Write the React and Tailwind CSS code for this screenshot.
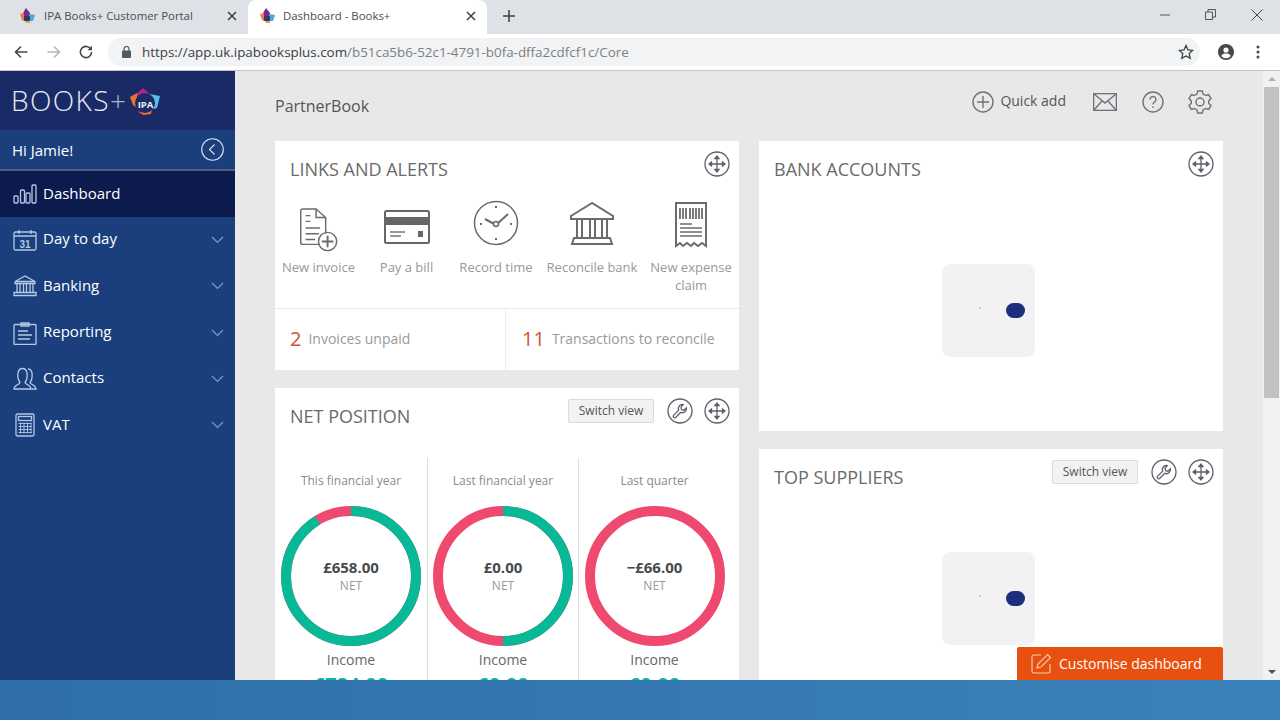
// ── Little drawings ───────────────────────────────────────────────────────────
function Favicon() {
  return (
    <svg width="16" height="16" viewBox="0 0 16 16" className="shrink-0">
      <path d="M7 0 L11 5 L11 13 L5 13 L4 5 Z" fill="#7b2a8c" />
      <path d="M10 6 L16 7 L14 13 L10 13 Z" fill="#49a8dc" />
      <path d="M1 6 L5 5 L5 13 L3 12 Z" fill="#e77f3a" />
      <path d="M6 13 L12 12 L11 15 L7 15 Z" fill="#e9a04a" />
      <rect x="5" y="8" width="6" height="5" rx="1" fill="#2c3a72" />
    </svg>
  );
}

function LogoMark() {
  return (
    <svg width="30" height="27" viewBox="0 0 30 27" className="shrink-0">
      <path d="M13 0 L21 7 L18 12 L9 12 L6 6 Z" fill="#b3237f" />
      <path d="M6 6 L9 26 L13 25 L12 22 L6 14 Z" fill="#b3237f" />
      <path d="M19 6 L30 8 L27 20 L20 22 Z" fill="#59bde8" />
      <path d="M0 9 L7 5 L7 20 L3 17 Z" fill="#e8742a" />
      <path d="M10 24 L22 20 L21 26 L13 27 Z" fill="#e8742a" />
      <circle cx="15" cy="15" r="10" fill="#1c2b66" />
      <text x="15.500" y="20" textAnchor="middle" fontSize="9.500" fontWeight="700" fill="#eef3fa" fontFamily="Open Sans, sans-serif">
        IPA
      </text>
    </svg>
  );
}

function MoveIcon() {
  return (
    <svg width="26" height="26" viewBox="0 0 26 26" fill="none" stroke="#5c6268" strokeWidth="1.300" className="shrink-0">
      <circle cx="13" cy="13" r="12" />
      <path d="M13 5.500v15M5.500 13h15" />
      <path d="M11 7.500l2-2.500 2 2.500zM11 18.500l2 2.500 2-2.500zM7.500 11L5 13l2.500 2zM18.500 11l2.500 2-2.500 2z" fill="#5c6268" />
    </svg>
  );
}

function WrenchIcon() {
  return (
    <svg width="26" height="26" viewBox="0 0 26 26" fill="none" stroke="#5c6268" strokeWidth="1.300" className="shrink-0">
      <circle cx="13" cy="13" r="12" />
      <path d="M16.200 6.600a4 4 0 0 0-4.500 5.600l-5.200 5.200a1.500 1.500 0 0 0 2.100 2.100l5.200-5.200a4 4 0 0 0 5.600-4.500l-2.500 2.400-2.300-.6-.6-2.300z" />
    </svg>
  );
}

function SwitchView() {
  return (
    <button className="block w-[86px] h-[24px] bg-[#f2f2f2] border border-[#dcdcdc] rounded-[2px] text-[12px] text-[#555] shrink-0 mr-[13px]">
      Switch view
    </button>
  );
}

function Spinner() {
  return (
    <div className="w-[93px] h-[93px] bg-[#f2f2f4] rounded-lg flex items-center justify-end pr-[10px] gap-[25px]">
      <div className="w-[2px] h-[2px] rounded-full bg-[#c4c4c8] mb-[6px]" />
      <div className="w-[19px] h-[15px] rounded-full bg-[#1b2f7c] blur-[0.5px]" />
    </div>
  );
}

function SmallClose() {
  return (
    <svg width="10" height="10" viewBox="0 0 10 10" stroke="#3c4043" strokeWidth="1.500" className="shrink-0">
      <path d="M1 1l8 8M9 1l-8 8" />
    </svg>
  );
}

// ── Browser chrome ────────────────────────────────────────────────────────────
function BrowserChrome() {
  return (
    <div className="font-['Open_Sans',sans-serif] shrink-0">
      <div className="h-[34px] bg-[#dee1e6] flex items-end">
        <div className="w-[248px] h-[34px] flex items-center pl-[19px] pr-[11px] pb-[2px]">
          <Favicon />
          <span className="ml-[9px] text-[11.400px] text-[#4a4d52] flex-1">IPA Books+ Customer Portal</span>
          <SmallClose />
        </div>
        <div className="w-[239px] h-[34px] bg-white rounded-t-lg flex items-center pl-[11px] pr-[11px] pb-[2px]">
          <Favicon />
          <span className="ml-[8px] text-[11.400px] text-[#4a4d52] flex-1">Dashboard - Books+</span>
          <SmallClose />
        </div>
        <div className="h-[34px] flex items-center ml-[16px] pb-[2px]">
          <svg width="12" height="12" viewBox="0 0 12 12" stroke="#3c4043" strokeWidth="1.500"><path d="M6 0v12M0 6h12" /></svg>
        </div>
        <div className="ml-auto h-[29px] self-start flex items-center pr-[17px] gap-[35px]">
          <svg width="10" height="10" viewBox="0 0 10 10" stroke="#555" strokeWidth="1"><path d="M0 5h10" /></svg>
          <svg width="11" height="11" viewBox="0 0 11 11" fill="none" stroke="#555" strokeWidth="1"><path d="M.5 3h7v7.500h-7zM3 3V.5h7.500V8H7.500" /></svg>
          <svg width="12" height="12" viewBox="0 0 12 12" stroke="#444" strokeWidth="1"><path d="M.5.5l11 11M11.500.5l-11 11" /></svg>
        </div>
      </div>
      <div className="h-[37px] bg-white border-b border-[#c4c4c4] flex items-center">
        <div className="w-[108px] flex items-center pl-[14px]">
          <svg width="14" height="14" viewBox="0 0 14 14" fill="none" stroke="#45484c" strokeWidth="1.600"><path d="M13.500 7H1.500M7 1.500L1.500 7 7 12.500" /></svg>
          <svg width="14" height="14" viewBox="0 0 14 14" fill="none" stroke="#b5b8bc" strokeWidth="1.600" className="ml-[19px]"><path d="M.5 7h12M7 1.500L12.500 7 7 12.500" /></svg>
          <svg width="14" height="14" viewBox="0 0 14 14" fill="none" stroke="#45484c" strokeWidth="1.600" className="ml-[18px]"><path d="M12 4.500A5.600 5.600 0 1 0 12.600 7" /><path d="M13 .8v4.500H8.500z" fill="#45484c" stroke="none" /></svg>
        </div>
        <div className="w-[1092px] h-[28px] bg-[#f1f3f4] rounded-full flex items-center pl-[14px] pr-[6px]">
          <svg width="9" height="12" viewBox="0 0 9 12" className="shrink-0">
            <rect x="0" y="4.500" width="9" height="7.500" rx="1" fill="#55585c" />
            <path d="M2 5V3a2.500 2.500 0 0 1 5 0v2" fill="none" stroke="#55585c" strokeWidth="1.200" />
          </svg>
          <span className="ml-[11px] text-[13.400px] text-[#3c4043] flex-1 whitespace-nowrap">
            https://app.uk.ipabooksplus.com<span className="text-[#7b7f84]">/b51ca5b6-52c1-4791-b0fa-dffa2cdfcf1c/Core</span>
          </span>
          <svg width="16" height="16" viewBox="0 0 16 16" fill="none" stroke="#3c4043" strokeWidth="1.300" className="shrink-0">
            <path d="M8 1.500l2 4.400 4.700.5-3.500 3.200 1 4.700L8 11.900l-4.200 2.400 1-4.700L1.300 6.400 6 5.900z" />
          </svg>
        </div>
        <div className="flex items-center ml-[18px]">
          <svg width="16" height="16" viewBox="0 0 16 16">
            <circle cx="8" cy="8" r="8" fill="#45484c" />
            <circle cx="8" cy="6" r="2.600" fill="white" />
            <path d="M3.200 12c1-1.800 2.800-2.400 4.800-2.400s3.800.6 4.800 2.400A6 6 0 0 1 8 14.200 6 6 0 0 1 3.200 12z" fill="white" />
          </svg>
          <svg width="4" height="14" viewBox="0 0 4 14" fill="#45484c" className="ml-[22px]">
            <circle cx="2" cy="2" r="1.500" /><circle cx="2" cy="7" r="1.500" /><circle cx="2" cy="12" r="1.500" />
          </svg>
        </div>
      </div>
    </div>
  );
}

// ── Sidebar ───────────────────────────────────────────────────────────────────
const sideStroke = { fill: "none", stroke: "#b4c9e6", strokeWidth: 1.300 };

const sideIcons = {
  dashboard: (
    <svg width="24" height="22" viewBox="0 0 24 22" {...sideStroke}>
      <rect x="1" y="13" width="4" height="7" rx="1" /><rect x="7.500" y="7" width="4" height="13" rx="1" />
      <rect x="13" y="10" width="4" height="10" rx="1" /><rect x="19" y="2" width="4" height="18" rx="1" />
    </svg>
  ),
  calendar: (
    <svg width="24" height="22" viewBox="0 0 24 22" {...sideStroke}>
      <rect x="1" y="3" width="22" height="18" rx="1.500" /><path d="M1 7h22M6 1v4M18 1v4" />
      <text x="12" y="18.500" textAnchor="middle" fontSize="10" fontWeight="700" fill="#b4c9e6" stroke="none" fontFamily="Liberation Sans, sans-serif">31</text>
    </svg>
  ),
  bank: (
    <svg width="24" height="22" viewBox="0 0 24 22" {...sideStroke}>
      <path d="M12 1L2 6.500h20zM2 6.500v2h20v-2M4 9v8M7 9v8M10.500 9v8M13.500 9v8M17 9v8M20 9v8M2.500 17.500h19M1 20.500h22v-3H1z" />
    </svg>
  ),
  report: (
    <svg width="24" height="24" viewBox="0 0 24 24" {...sideStroke}>
      <rect x="1" y="3.500" width="22" height="20" rx="1" /><path d="M8 5V2h8v3zM5 10h10M5 14h14M5 18h12" />
    </svg>
  ),
  contacts: (
    <svg width="24" height="24" viewBox="0 0 24 24" {...sideStroke}>
      <path d="M1 22c0-4 5-4 6-6.500C5 13 4.500 10 5 6c.5-3 2.500-4.500 4.500-4.500S13.500 3 14 6c.5 4 0 7-2 9.500 1 2.500 6 2.500 6 6.500z" />
      <path d="M15 2c2 0 3.500 1.500 4 4 .5 4 0 7-2 9.500 1 2.500 6 2.500 6 6.500h-4.500" />
    </svg>
  ),
  vat: (
    <svg width="20" height="24" viewBox="0 0 20 24" {...sideStroke}>
      <rect x="1" y="1" width="18" height="22" rx="1.500" /><rect x="3.500" y="3.500" width="13" height="4" />
      <path d="M3.500 10.500h13M3.500 13.500h13M3.500 16.500h13M3.500 19.500h13M5.500 9.500v11M9 9.500v11M12.500 9.500v11M16 9.500v11" strokeWidth="0.900" />
    </svg>
  ),
};

const navItems = [
  { label: "Day to day", icon: "calendar" },
  { label: "Banking", icon: "bank" },
  { label: "Reporting", icon: "report" },
  { label: "Contacts", icon: "contacts" },
  { label: "VAT", icon: "vat" },
];

function Sidebar() {
  return (
    <aside className="w-[235px] shrink-0 bg-[#1a3f7c] text-white flex flex-col">
      <div className="h-[59px] bg-[#1a2a66] flex items-center pl-[11px]">
        <span className="text-[28px] font-light text-[#e6ebf4] tracking-[1.400px] leading-none -mt-[2px]">BOOKS<span className="text-[#a9b6d2]">+</span></span>
        <span className="ml-[3px] mt-[1px]"><LogoMark /></span>
      </div>
      <div className="h-[41px] flex items-center justify-between pl-[12px] pr-[11px] border-b-2 border-[#4d5f80]">
        <span className="text-[15px] mt-[1px]">Hi Jamie!</span>
        <svg width="23" height="23" viewBox="0 0 23 23" fill="none" stroke="#dbe5f2" strokeWidth="1.100">
          <circle cx="11.500" cy="11.500" r="10.800" /><path d="M13.500 6.500l-5 5 5 5" />
        </svg>
      </div>
      <div className="h-[46px] bg-[#0c1a4e] flex items-center pl-[13px]">
        <span className="w-[24px] flex justify-center">{sideIcons.dashboard}</span>
        <span className="ml-[6px] text-[15px] -mt-[2px]">Dashboard</span>
      </div>
      {navItems.map((item) => (
        <div key={item.label} className="h-[46.300px] flex items-center pl-[13px] pr-[11px]">
          <span className="w-[24px] flex justify-center">{sideIcons[item.icon]}</span>
          <span className="ml-[6px] text-[15px] flex-1 -mt-[3px]">{item.label}</span>
          <svg width="13" height="8" viewBox="0 0 13 8" fill="none" stroke="#7f9cc5" strokeWidth="1.200"><path d="M1 1l5.500 5.500L12 1" /></svg>
        </div>
      ))}
    </aside>
  );
}

// ── Links and alerts ──────────────────────────────────────────────────────────
const lg = { fill: "none", stroke: "#6b6b6b", strokeWidth: 1.500 };

const linkIcons = [
  <svg key="a" width="40" height="46" viewBox="0 0 40 48" {...lg} className="mt-[11px] -ml-[1px]">
    <path d="M22 39H4a2 2 0 0 1-2-2V4a2 2 0 0 1 2-2h14l10 9v17M18 2v9h10" />
    <path d="M7 9h5M7 15h5M7 22h15M7 28h14M7 34h10" />
    <circle cx="30" cy="36" r="9.500" /><path d="M30 30v12M24 36h12" strokeWidth="2" />
  </svg>,
  <svg key="b" width="46" height="34" viewBox="0 0 46 34" className="mt-[4px]">
    <rect x="1" y="1" width="44" height="32" rx="1.500" fill="none" stroke="#666" strokeWidth="2" />
    <rect x="1" y="7" width="44" height="8" fill="#666" />
    <path d="M6 22h15M6 26h11" stroke="#999" strokeWidth="2" />
    <rect x="34" y="21" width="5" height="6" fill="#666" />
  </svg>,
  <svg key="c" width="46" height="46" viewBox="0 0 46 46" {...lg} className="-mt-[4px]">
    <circle cx="23" cy="23" r="21.500" />
    <path d="M23 25L12 19M23 25l12-11" strokeWidth="2" />
    <circle cx="23" cy="24" r="2.500" fill="white" />
    <path d="M23 6v2M23 38v2M7 24h2M37 24h2" strokeWidth="2" />
  </svg>,
  <svg key="d" width="46" height="46" viewBox="0 0 46 46" {...lg} strokeWidth="2" className="-mt-[1px]">
    <path d="M23 2L2 15v3h42v-3z" />
    <path d="M8 18v19M13 18v19M21 18v19M26 18v19M33 18v19M38 18v19M6 37h34M3 43l2-6h36l2 6z" />
  </svg>,
  <svg key="e" width="34" height="46" viewBox="0 0 34 46" {...lg} className="mt-[1px]">
    <path d="M2 44V1h30v43l-4-3-4 3-4-3-3 3-4-3-4 3-3-3z" strokeWidth="2" />
    <path d="M6 6v11M9 6v11M12 6v11M16 6v11M19 6v11M22 6v11M25 6v11M28 6v11" strokeWidth="1.800" />
    <path d="M6 22h12M6 26h22M6 30h22M6 34h22" />
  </svg>,
];

const links = [
  { label: "New invoice", icon: 0 },
  { label: "Pay a bill", icon: 1 },
  { label: "Record time", icon: 2 },
  { label: "Reconcile bank", icon: 3 },
  { label: "New expense claim", icon: 4 },
];

function CardTitle({ children }) {
  return <h2 className="pl-[15px] pt-[15px] text-[18px] leading-[26px] text-[#6a6a6a] font-normal flex-1">{children}</h2>;
}

function LinksCard() {
  return (
    <section className="bg-white h-[229px] flex flex-col">
      <div className="flex items-start pr-[9px]">
        <CardTitle>LINKS AND ALERTS</CardTitle>
        <div className="pt-[10px]"><MoveIcon /></div>
      </div>
      <div className="grid grid-cols-[87px_89px_90px_102px_96px] mt-[18px] h-[108px]">
        {links.map((l) => (
          <div key={l.label} className="flex flex-col items-center">
            <div className="h-[49px] flex items-center justify-center">{linkIcons[l.icon]}</div>
            <div className="mt-[9px] px-[3px] text-[13px] leading-[18px] text-[#999] text-center">{l.label}</div>
          </div>
        ))}
      </div>
      <div className="flex-1 border-t border-[#e6e6e6] grid grid-cols-[231px_233px]">
        <div className="flex items-center pl-[15px] pb-[2px] border-r border-[#eeeeee]">
          <span className="text-[20px] text-[#d0533a]">2</span>
          <span className="ml-[7px] text-[14px] text-[#999]">Invoices unpaid</span>
        </div>
        <div className="flex items-center pl-[16px] pb-[2px]">
          <span className="text-[20px] text-[#d0533a]">11</span>
          <span className="ml-[7px] text-[14px] text-[#999]">Transactions to reconcile</span>
        </div>
      </div>
    </section>
  );
}

// ── Net position ──────────────────────────────────────────────────────────────
function Donut({ pink, net }) {
  const green = 100 - pink;
  return (
    <div className="grid w-[140px] h-[140px] mx-auto">
      <svg width="140" height="140" viewBox="0 0 140 140" className="[grid-area:1/1]">
        <g transform="rotate(-90 70 70)" fill="none" strokeWidth="10">
          <circle cx="70" cy="70" r="65" stroke="#f0496f" />
          {green > 0 && (
            <circle cx="70" cy="70" r="65" stroke="#08b997" pathLength="100" strokeDasharray={`${green} ${pink}`} />
          )}
        </g>
      </svg>
      <div className="[grid-area:1/1] flex flex-col items-center justify-center">
        <span className="text-[15px] font-bold leading-[20px] text-[#4a4a4a]">{net}</span>
        <span className="text-[12px] leading-[18px] text-[#999]">NET</span>
      </div>
    </div>
  );
}

const periods = [
  { label: "This financial year", pink: 8.600, net: "£658.00", income: "£724.00" },
  { label: "Last financial year", pink: 50, net: "£0.00", income: "£0.00" },
  { label: "Last quarter", pink: 100, net: "−£66.00", income: "£0.00" },
];

function NetPositionCard() {
  return (
    <section className="bg-white mt-[18px]">
      <div className="flex items-start pr-[9px] h-[70px]">
        <CardTitle>NET POSITION</CardTitle>
        <div className="pt-[11px]"><SwitchView /></div>
        <div className="pt-[10px] flex gap-[11px]"><WrenchIcon /><MoveIcon /></div>
      </div>
      <div className="grid grid-cols-[153px_151px_151px]">
        {periods.map((p, i) => (
          <div key={p.label} className={i < 2 ? "border-r border-[#dedede] text-center pt-[14px] pb-[20px]" : "text-center pt-[14px] pb-[20px]"}>
            <div className="text-[12px] leading-[18px] text-[#8a8a8a]">{p.label}</div>
            <div className="mt-[16px]"><Donut pink={p.pink} net={p.net} /></div>
            <div className="mt-[4px] text-[14px] leading-[20px] text-[#666]">Income</div>
            <div className="text-[20px] font-bold leading-[30px] text-[#08b997]">{p.income}</div>
          </div>
        ))}
      </div>
    </section>
  );
}

// ── Page ──────────────────────────────────────────────────────────────────────
function TopActions() {
  const s = { fill: "none", stroke: "#6d7379", strokeWidth: 1.400 };
  return (
    <div className="h-[70px] flex items-center justify-between pr-[11px] shrink-0">
      <h1 className="text-[16px] font-normal text-[#555] -mt-[1px]">PartnerBook</h1>
      <div className="flex items-center -mt-[8px]">
        <svg width="22" height="22" viewBox="0 0 22 22" {...s}><circle cx="11" cy="11" r="10" /><path d="M11 5v12M5 11h12" /></svg>
        <span className="ml-[6px] text-[14px] text-[#555] -mt-[3px]">Quick add</span>
        <svg width="24" height="18" viewBox="0 0 24 18" {...s} className="ml-[27px]"><rect x=".6" y=".6" width="22.800" height="16.800" /><path d="M1 1l11 9 11-9M1 17l8-9M23 17l-8-9" /></svg>
        <svg width="22" height="22" viewBox="0 0 22 22" {...s} className="ml-[25px]">
          <circle cx="11" cy="11" r="10" />
          <path d="M8 8.500a3 3 0 1 1 4.500 2.600c-1 .6-1.500 1.200-1.500 2.400M11 15.500v1.500" />
        </svg>
        <svg width="24" height="24" viewBox="0 0 24 24" {...s} className="ml-[24px]">
          <path d="M9.700 2h4.600l.7 3 2.700 1.500 3-.9 2.300 4-2.300 2.100v2.600l2.300 2.100-2.300 4-3-.9L15 21l-.7 3H9.700L9 21l-2.700-1.500-3 .9-2.300-4 2.300-2.100v-2.600L1 9.600l2.300-4 3 .9L9 5z" transform="translate(0 -1)" />
          <circle cx="12" cy="12" r="4" />
        </svg>
      </div>
    </div>
  );
}

function Scrollbar() {
  return (
    <div className="w-[17px] shrink-0 bg-[#f1f1f1] flex flex-col items-center justify-between">
      <div className="w-full flex flex-col items-center">
        <div className="h-[16px] flex items-center"><div className="w-0 h-0 border-x-[4px] border-x-transparent border-b-[4px] border-b-[#b0b0b0]" /></div>
        <div className="w-[15px] h-[311px] bg-[#c1c1c1]" />
      </div>
      <div className="h-[16px] flex items-center"><div className="w-0 h-0 border-x-[4px] border-x-transparent border-t-[4px] border-t-[#505050]" /></div>
    </div>
  );
}

export default function App() {
  return (
    <div className="w-[1280px] h-[720px] flex flex-col overflow-hidden bg-white font-['Open_Sans',sans-serif]">
      <BrowserChrome />
      <div className="h-[609px] flex overflow-hidden relative">
        <Sidebar />
        <main className="flex-1 bg-[#e8e8e8] pl-[40px] pr-[40px] overflow-hidden">
          <TopActions />
          <div className="grid grid-cols-[464px_464px] gap-x-[20px]">
            <div>
              <LinksCard />
              <NetPositionCard />
            </div>
            <div>
              <section className="bg-white h-[290px]">
                <div className="flex items-start pr-[9px]">
                  <CardTitle>BANK ACCOUNTS</CardTitle>
                  <div className="pt-[10px]"><MoveIcon /></div>
                </div>
                <div className="flex justify-center mt-[82px] pr-[6px]"><Spinner /></div>
              </section>
              <section className="bg-white mt-[18px] h-[300px]">
                <div className="flex items-start pr-[9px]">
                  <CardTitle>TOP SUPPLIERS</CardTitle>
                  <div className="pt-[11px]"><SwitchView /></div>
                  <div className="pt-[10px] flex gap-[11px]"><WrenchIcon /><MoveIcon /></div>
                </div>
                <div className="flex justify-center mt-[62px] pr-[6px]"><Spinner /></div>
              </section>
            </div>
          </div>
        </main>
        <Scrollbar />
        <button className="absolute right-[57px] bottom-0 w-[206px] h-[33px] bg-[#e8500f] rounded-t-[2px] flex items-center pl-[14px] text-white text-[14px]">
          <svg width="21" height="21" viewBox="0 0 21 21" fill="none" stroke="#f8c9ae" strokeWidth="1.200" className="shrink-0">
            <path d="M10 2H2.500A1.500 1.500 0 0 0 1 3.500v15A1.500 1.500 0 0 0 2.500 20h15a1.500 1.500 0 0 0 1.500-1.500V11" />
            <path d="M16.500 1.500l3 3L10 14l-4 1 1-4z" />
          </svg>
          <span className="ml-[7px]">Customise dashboard</span>
        </button>
      </div>
      <div className="h-[40px] shrink-0 bg-linear-to-r from-[#2e6fa9] to-[#3a82bb]" />
    </div>
  );
}
